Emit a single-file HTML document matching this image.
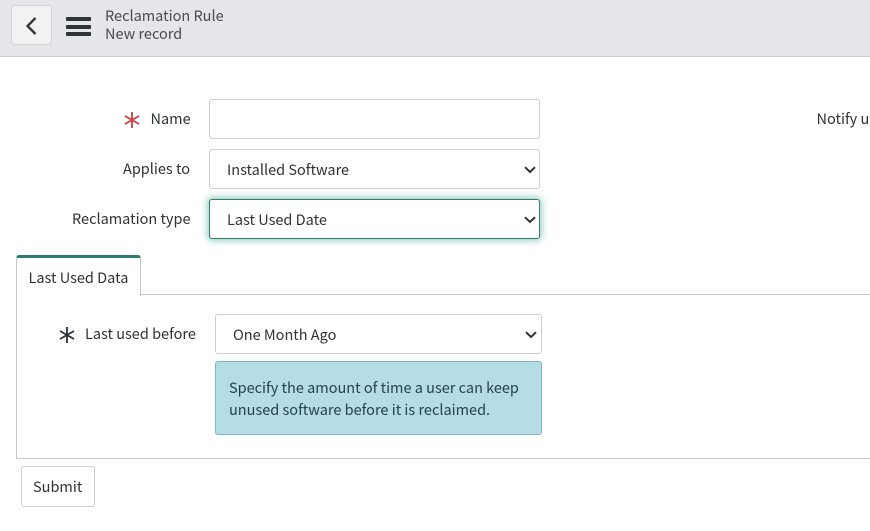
<!DOCTYPE html>
<html lang="en">
<head>
<meta charset="utf-8">
<title>Reclamation Rule</title>
<style>
html,body{margin:0;padding:0;background:#fff;}
body{width:870px;height:531px;overflow:hidden;position:relative;font-family:"Noto Sans CJK JP","Liberation Sans",sans-serif;color:#2e3338;font-size:14.5px;}
.a{position:absolute;box-sizing:border-box;}
.t{position:absolute;white-space:nowrap;line-height:20px;height:20px;}
.box{position:absolute;box-sizing:border-box;background:#fff;border:1px solid #cfcfcf;border-radius:3px;}
svg{position:absolute;display:block;overflow:visible;}
</style>
</head>
<body>
<div class="a" style="left:0;top:0;width:870px;height:57px;background:#e4e6e9;border-bottom:1px solid #cfd1d3;"></div>
<div class="a" style="left:11px;top:5px;width:41px;height:40px;background:#f1f2f4;border:1px solid #d3d4d6;border-radius:4px;"></div>
<svg style="left:25px;top:16px;" width="12" height="20" viewBox="0 0 12 20"><path d="M10.5 2 L2.5 10 L10.5 18" fill="none" stroke="#2e3338" stroke-width="2.3"/></svg>
<div class="a" style="left:66px;top:17px;width:25px;height:4px;background:#2e3338;border-radius:1px;"></div>
<div class="a" style="left:66px;top:25px;width:25px;height:4px;background:#2e3338;border-radius:1px;"></div>
<div class="a" style="left:66px;top:32px;width:25px;height:4px;background:#2e3338;border-radius:1px;"></div>
<div class="t" style="left:105px;top:6px;color:#474c50;">Reclamation Rule</div>
<div class="t" style="left:105px;top:24px;color:#474c50;">New record</div>

<svg style="left:124px;top:112px;" width="16" height="16" viewBox="0 0 16 16"><path d="M8 0V16M1 4L15 12M15 4L1 12" stroke="#c9423c" stroke-width="1.8" fill="none"/></svg>
<div class="t" style="left:150.5px;top:109px;">Name</div>
<div class="box" style="left:209px;top:99px;width:331px;height:40px;"></div>
<div class="t" style="left:816.5px;top:109px;">Notify u</div>

<div class="t" style="left:123px;top:159px;">Applies to</div>
<div class="box" style="left:209px;top:149px;width:331px;height:40px;"></div>
<div class="t" style="left:227px;top:160px;">Installed Software</div>
<svg style="left:524px;top:166px;" width="12" height="8" viewBox="0 0 12 8"><path d="M1 1.2L6 6L11 1.2" fill="none" stroke="#2e3338" stroke-width="2"/></svg>

<div class="t" style="left:72px;top:209px;">Reclamation type</div>
<div class="box" style="left:209px;top:199px;width:331px;height:40px;border-color:#2f7f76;box-shadow:0 0 7px 2px rgba(80,165,150,.55);"></div>
<div class="t" style="left:227px;top:210px;">Last Used Date</div>
<svg style="left:524px;top:216px;" width="12" height="8" viewBox="0 0 12 8"><path d="M1 1.2L6 6L11 1.2" fill="none" stroke="#2e3338" stroke-width="2"/></svg>

<div class="a" style="left:16px;top:294px;width:854px;height:165px;border-left:1px solid #c9c9c9;border-top:1px solid #c9c9c9;border-bottom:1px solid #c9c9c9;"></div>
<div class="a" style="left:16px;top:255px;width:125px;height:41px;background:#fff;border-left:1px solid #c9c9c9;border-right:1px solid #c9c9c9;border-top:3px solid #2b7f72;border-radius:3px 3px 0 0;"></div>
<div class="t" style="left:28.5px;top:268px;">Last Used Data</div>

<svg style="left:59px;top:327px;" width="16" height="16" viewBox="0 0 16 16"><path d="M8 0V16M1 4L15 12M15 4L1 12" stroke="#2e3338" stroke-width="1.8" fill="none"/></svg>
<div class="t" style="left:85px;top:324px;">Last used before</div>
<div class="box" style="left:215px;top:314px;width:327px;height:40px;"></div>
<div class="t" style="left:233px;top:325px;">One Month Ago</div>
<svg style="left:525px;top:331px;" width="12" height="8" viewBox="0 0 12 8"><path d="M1 1.2L6 6L11 1.2" fill="none" stroke="#2e3338" stroke-width="2"/></svg>

<div class="a" style="left:215px;top:361px;width:327px;height:74px;background:#b4dde6;border:1px solid #7fb9c6;border-radius:3px;"></div>
<div class="t" style="left:229px;top:378px;color:#24434c;">Specify the amount of time a user can keep</div>
<div class="t" style="left:229px;top:400px;color:#24434c;">unused software before it is reclaimed.</div>

<div class="box" style="left:21px;top:466px;width:74px;height:41px;"></div>
<div class="t" style="left:33px;top:477px;">Submit</div>
</body>
</html>
